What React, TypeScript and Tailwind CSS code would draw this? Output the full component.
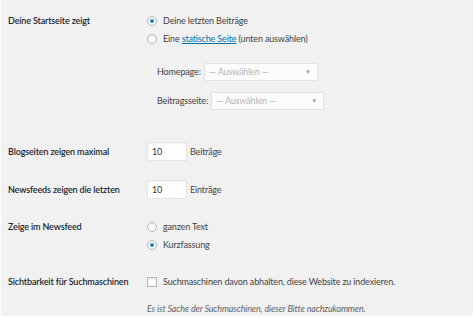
import React from "react";

function Radio({ checked }: { checked?: boolean }) {
  return (
    <span className="flex h-[10px] w-[10px] shrink-0 items-center justify-center rounded-full border border-[#b4b9be] bg-white shadow-[inset_0_1px_2px_rgba(0,0,0,0.1)]">
      {checked && <span className="h-[4px] w-[4px] rounded-full bg-[#1e8cbe]" />}
    </span>
  );
}

function Select({ width }: { width: string }) {
  return (
    <div
      className={`flex h-[18px] ${width} items-center justify-between border border-[#e2e2e2] bg-[#fcfcfc] pl-[4px] pr-[6px] text-[#b0b4b8]`}
    >
      <span>— Auswählen —</span>
      <span className="text-[6px] text-[#9a9a9a]">▼</span>
    </div>
  );
}

function NumberInput({ value }: { value: string }) {
  return (
    <div className="flex h-[19px] w-[40px] items-center border border-[#e4e4e4] bg-white pl-[4px] text-[#32373c] shadow-[inset_0_1px_2px_rgba(0,0,0,0.05)]">
      {value}
    </div>
  );
}

function App() {
  return (
    <div
      className="h-[318px] w-[474px] overflow-hidden whitespace-nowrap border-x border-b-2 border-white bg-[#f1f1f1] pl-[7px] text-[9px] leading-[18px] tracking-[-0.15px] text-[#444]"
      style={{ fontFamily: 'Lato, "Open Sans", sans-serif' }}
    >
      {/* Startseite */}
      <div className="mt-[12px] flex">
        <div className="w-[139px] font-semibold text-[#23282d]">Deine Startseite zeigt</div>
        <div className="flex flex-col">
          <label className="flex h-[18px] items-center gap-[6px]">
            <Radio checked />
            <span>Deine letzten Beiträge</span>
          </label>
          <label className="flex h-[18px] items-center gap-[6px]">
            <Radio />
            <span>
              Eine <span className="text-[#0073aa] underline">statische Seite</span> (unten auswählen)
            </span>
          </label>
          <div className="mt-[15px] ml-[10px] flex items-center gap-[3px]">
            <span>Homepage:</span>
            <Select width="w-[114px]" />
          </div>
          <div className="mt-[11px] ml-[10px] flex items-center gap-[3px]">
            <span>Beitragsseite:</span>
            <Select width="w-[113px]" />
          </div>
        </div>
      </div>

      {/* Blogseiten */}
      <div className="mt-[32px] flex items-center">
        <div className="w-[139px] font-semibold text-[#23282d]">Blogseiten zeigen maximal</div>
        <NumberInput value="10" />
        <span className="ml-[3px]">Beiträge</span>
      </div>

      {/* Newsfeeds */}
      <div className="mt-[19px] flex items-center">
        <div className="w-[139px] font-semibold text-[#23282d]">Newsfeeds zeigen die letzten</div>
        <NumberInput value="10" />
        <span className="ml-[3px]">Einträge</span>
      </div>

      {/* Zeige im Newsfeed */}
      <div className="mt-[19px] flex">
        <div className="w-[139px] font-semibold text-[#23282d]">Zeige im Newsfeed</div>
        <div className="flex flex-col">
          <label className="flex h-[18px] items-center gap-[6px]">
            <Radio />
            <span>ganzen Text</span>
          </label>
          <label className="flex h-[18px] items-center gap-[6px]">
            <Radio checked />
            <span>Kurzfassung</span>
          </label>
        </div>
      </div>

      {/* Sichtbarkeit */}
      <div className="mt-[19px] flex">
        <div className="w-[139px] font-semibold text-[#23282d]">Sichtbarkeit für Suchmaschinen</div>
        <div className="flex flex-col">
          <label className="flex h-[18px] items-center gap-[6px]">
            <span className="h-[10px] w-[10px] shrink-0 border border-[#b4b9be] bg-white shadow-[inset_0_1px_2px_rgba(0,0,0,0.1)]" />
            <span>Suchmaschinen davon abhalten, diese Website zu indexieren.</span>
          </label>
          <p className="mt-[9px] italic text-[#666]">Es ist Sache der Suchmaschinen, dieser Bitte nachzukommen.</p>
        </div>
      </div>
    </div>
  );
}

export default App;
